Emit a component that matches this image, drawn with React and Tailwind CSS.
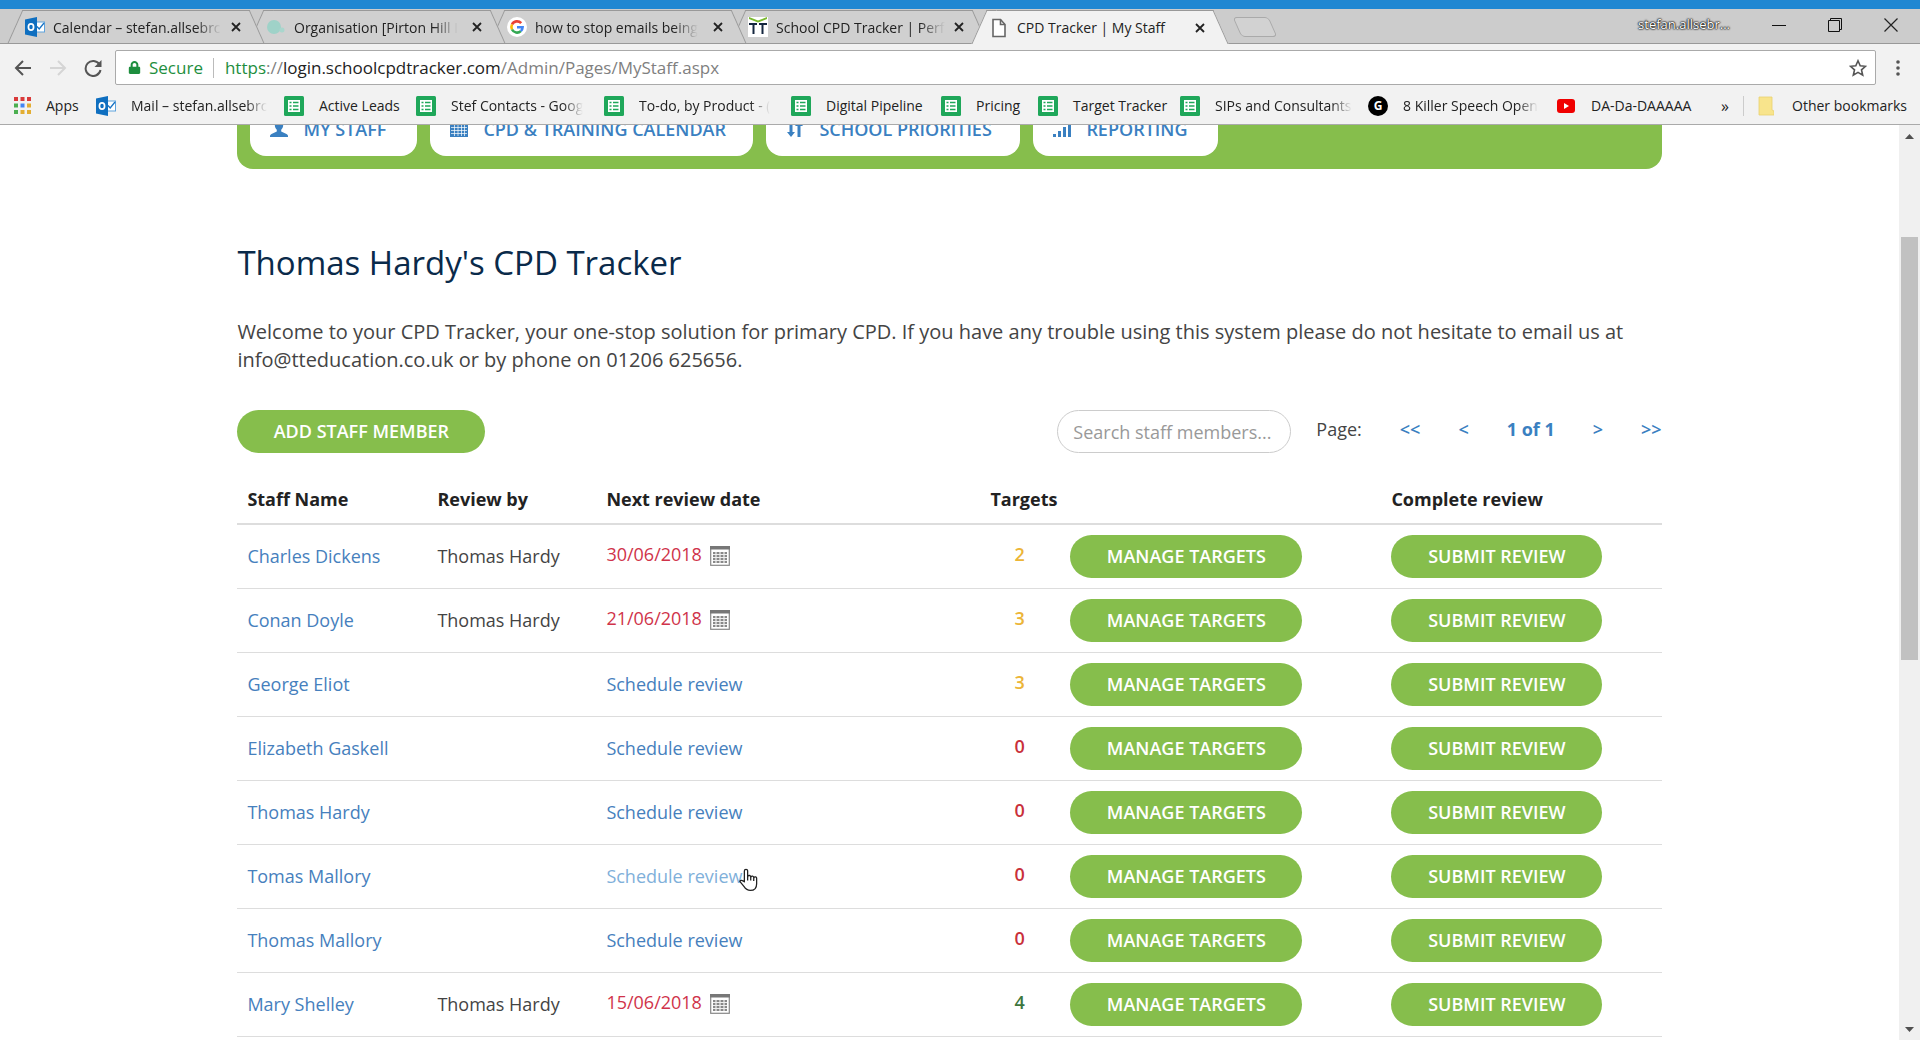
import { FaLock } from 'react-icons/fa';
import { clsx } from 'clsx';

const TABS = [
  { title: 'Calendar – stefan.allsebrc', icon: 'outlook', z: 'z-40' },
  { title: 'Organisation [Pirton Hill I', icon: 'blob', z: 'z-30' },
  { title: 'how to stop emails being', icon: 'google', z: 'z-20' },
  { title: 'School CPD Tracker | Perf', icon: 'tt', z: 'z-10' },
  { title: 'CPD Tracker | My Staff', icon: 'file', z: 'z-50', active: true },
];

const BOOKMARKS = [
  { label: 'Apps', icon: 'apps', width: 'w-[67px]' },
  { label: 'Mail – stefan.allsebrc', icon: 'outlook', width: 'w-[173px]', fade: true },
  { label: 'Active Leads', icon: 'sheet', width: 'w-[117px]' },
  { label: 'Stef Contacts - Goog', icon: 'sheet', width: 'w-[173px]', fade: true },
  { label: 'To-do, by Product - (', icon: 'sheet', width: 'w-[172px]', fade: true },
  { label: 'Digital Pipeline', icon: 'sheet', width: 'w-[135px]' },
  { label: 'Pricing', icon: 'sheet', width: 'w-[82px]' },
  { label: 'Target Tracker', icon: 'sheet', width: 'w-[127px]' },
  { label: 'SIPs and Consultants', icon: 'sheet', width: 'w-[173px]', fade: true },
  { label: '8 Killer Speech Open', icon: 'g', width: 'w-[173px]', fade: true },
  { label: 'DA-Da-DAAAAA', icon: 'youtube', width: 'w-[143px]' },
];

const NAV = [
  { label: 'MY STAFF', icon: 'user', width: 'w-[167px]' },
  { label: 'CPD & TRAINING CALENDAR', icon: 'calendar', width: 'w-[323px]' },
  { label: 'SCHOOL PRIORITIES', icon: 'sort', width: 'w-[254px]' },
  { label: 'REPORTING', icon: 'bars', width: 'w-[185px]' },
];

const STAFF = [
  { name: 'Charles Dickens', by: 'Thomas Hardy', date: '30/06/2018', targets: 2 },
  { name: 'Conan Doyle', by: 'Thomas Hardy', date: '21/06/2018', targets: 3 },
  { name: 'George Eliot', targets: 3 },
  { name: 'Elizabeth Gaskell', targets: 0 },
  { name: 'Thomas Hardy', targets: 0 },
  { name: 'Tomas Mallory', targets: 0, hovered: true },
  { name: 'Thomas Mallory', targets: 0 },
  { name: 'Mary Shelley', by: 'Thomas Hardy', date: '15/06/2018', targets: 4 },
];

function targetColor(n) {
  if (n === 0) return 'text-[#c9303a]';
  return n < 4 ? 'text-[#ecb537]' : 'text-[#3c763d]';
}

function Icon({ name }) {
  switch (name) {
    case 'outlook':
      return (
        <svg viewBox="0 0 20 20" className="size-5 shrink-0">
          <rect x="9" y="5" width="10.500" height="10" fill="#fff" stroke="#5fa3dc" />
          <path d="M12 9.500l2.200 2.500 4.800-6" fill="none" stroke="#1a74c4" strokeWidth="1.300" />
          <path d="M0 2.500L12 0v20L0 17.500z" fill="#0f6fc0" />
          <ellipse cx="6" cy="10" rx="2.600" ry="3.200" fill="none" stroke="#fff" strokeWidth="1.700" />
        </svg>
      );
    case 'blob':
      return (
        <svg viewBox="0 0 20 20" className="size-5 shrink-0">
          <circle cx="8" cy="10" r="7" fill="#9fd2c8" />
          <circle cx="16" cy="13" r="2.500" fill="#a9d6cd" />
        </svg>
      );
    case 'google':
      return (
        <svg viewBox="0 0 20 20" className="size-5 shrink-0">
          <circle cx="10" cy="10" r="10" fill="#fff" />
          <g fill="none" strokeWidth="2.600">
            <path d="M14.200 6.200A5.600 5.600 0 0 0 5 7.500" stroke="#ea4335" />
            <path d="M5 7.500a5.600 5.600 0 0 0 0 5" stroke="#fbbc05" />
            <path d="M5 12.500a5.600 5.600 0 0 0 8.800 1.600" stroke="#34a853" />
            <path d="M13.800 14.100A5.600 5.600 0 0 0 15.600 10.200H10" stroke="#4285f4" />
          </g>
        </svg>
      );
    case 'tt':
      return (
        <svg viewBox="0 0 20 20" className="size-5 shrink-0">
          <rect width="20" height="20" fill="#fff" />
          <path d="M1 0l9 3.500L19 0v2L10 5.500 1 2z" fill="#7ab92f" />
          <path d="M1 7h8M5.500 7v10M11 7h8M14.500 7v10" fill="none" stroke="#14263f" strokeWidth="2" />
        </svg>
      );
    case 'file':
      return (
        <svg viewBox="0 0 20 20" className="size-5 shrink-0" fill="#fff" stroke="#666" strokeWidth="1.600">
          <path d="M4 1.500h7.500L16 6.500v12H4z" />
          <path d="M11.500 1.500v5H16" fill="none" />
        </svg>
      );
    case 'apps':
      return (
        <svg viewBox="0 0 17 17" className="size-[17px] shrink-0">
          {['#d93a3a', '#d93a3a', '#d93a3a', '#4caf50', '#4285f4', '#e3ae33', '#4caf50', '#e3ae33', '#e3ae33'].map((c, i) => (
            <rect key={i} x={(i % 3) * 6.5} y={Math.floor(i / 3) * 6.5} width="4" height="4" fill={c} />
          ))}
        </svg>
      );
    case 'sheet':
      return (
        <svg viewBox="0 0 20 20" className="size-5 shrink-0">
          <rect width="20" height="20" rx="1.500" fill="#1fa75a" />
          <rect x="4" y="4" width="12" height="12" fill="#fff" />
          <path d="M5.500 6.500h2M9 6.500h5.500M5.500 10h2M9 10h5.500M5.500 13.500h2M9 13.500h5.500" stroke="#1fa75a" strokeWidth="1.500" />
        </svg>
      );
    case 'g':
      return (
        <span className="flex size-5 shrink-0 items-center justify-center rounded-full bg-black text-xs font-bold text-white">G</span>
      );
    case 'youtube':
      return (
        <svg viewBox="0 0 20 20" className="size-5 shrink-0">
          <rect x="1" y="3" width="18" height="14" rx="3" fill="#f00000" />
          <path d="M8 7l5 3-5 3z" fill="#fff" />
        </svg>
      );
    case 'user':
      return (
        <svg viewBox="0 0 18 18" className="size-[18px] shrink-0" fill="currentColor">
          <path d="M9 0c2.800 0 4.200 2 4.200 4.800 0 2-.8 3.900-2 5v1.700l5.300 2.600c1 .5 1.500 1.200 1.500 2.200V17H0v-.700c0-1 .5-1.700 1.500-2.200l5.300-2.600V9.800c-1.200-1.100-2-3-2-5C4.800 2 6.200 0 9 0z" />
        </svg>
      );
    case 'calendar':
      return (
        <svg viewBox="0 0 18 18" className="size-[18px] shrink-0">
          <path d="M0 1h18v16H0z" fill="currentColor" />
          <path d="M1 7.500h16M1 10.500h16M1 13.500h16M4.500 5v11M8 5v11M11.500 5v11M14.500 5v11" stroke="#fff" strokeWidth=".7" />
        </svg>
      );
    case 'sort':
      return (
        <svg viewBox="0 0 18 18" className="size-[18px] shrink-0" fill="currentColor">
          <path d="M3.500 1h3v11H9l-4 5-4-5h2.500zM11.500 17h3V6H17l-4-5-4 5h2.500z" />
        </svg>
      );
    case 'bars':
      return (
        <svg viewBox="0 0 18 18" className="size-[18px] shrink-0" fill="currentColor">
          <path d="M0 14h3v3H0zM5 11h3v6H5zM10 7h3v10h-3zM15 2h3v15h-3z" />
        </svg>
      );
    default:
      return null;
  }
}

function Tab({ tab }) {
  const face = tab.active
    ? '-mb-px before:bg-[#f2f2f2] after:bg-[#f2f2f2]'
    : 'before:bg-[#d0d0d0] after:bg-[#d0d0d0]';
  return (
    <div
      className={clsx(
        'relative -mr-[15px] flex w-64 items-center pt-px pr-[22px] pl-[17px] before:absolute before:inset-y-0 before:left-[7px] before:right-8 before:-skew-x-24 before:border-t before:border-l before:border-[#999] after:absolute after:inset-y-0 after:left-8 after:right-[7px] after:skew-x-24 after:border-t after:border-r after:border-[#999]',
        face,
        tab.z
      )}
    >
      <a href="#" className="relative z-10 flex min-w-0 flex-1 items-center gap-2">
        <Icon name={tab.icon} />
        <span className={clsx('whitespace-nowrap', !tab.active && 'mask-r-from-85%')}>{tab.title}</span>
      </a>
      <button type="button" aria-label="Close tab" className="relative z-10 p-px">
        <svg viewBox="0 0 10 10" className="size-[10px]" stroke="#222" strokeWidth="1.800">
          <path d="M1 1l8 8M9 1L1 9" />
        </svg>
      </button>
    </div>
  );
}

function Browser() {
  return (
    <header className="shrink-0 border-b border-[#aaa] bg-[#f2f2f2] text-[14px] text-[#222]">
      <div className="h-[9px] bg-[#1f87d2]" />
      <div className="flex h-[35px] border-b border-[#999] bg-[#ccc] pt-px pl-2">
        {TABS.map(t => <Tab key={t.title} tab={t} />)}
        <button type="button" aria-label="New tab" className="mt-[7px] ml-6 h-5 w-9 skew-x-24 rounded-sm border border-[#aaa] bg-[#d2d2d2]" />
        <div className="ml-auto flex items-center gap-[42px] pr-[22px] pb-1">
          <span className="text-[13px] whitespace-nowrap text-white text-shadow-[0_0_2px_#000,0_0_2px_#000,0_0_1px_#000]">stefan.allsebr...</span>
          <button type="button" aria-label="Minimise">
            <svg viewBox="0 0 14 14" className="size-[14px]" stroke="#111"><path d="M0 7.500h14" /></svg>
          </button>
          <button type="button" aria-label="Restore">
            <svg viewBox="0 0 14 14" className="size-[14px]" fill="none" stroke="#111"><path d="M.5 2.500h11v11H.5zM2.500 2.500v-2h11v11h-2" /></svg>
          </button>
          <button type="button" aria-label="Close">
            <svg viewBox="0 0 14 14" className="size-[14px]" stroke="#222" strokeWidth="1.200"><path d="M.5.5l13 13M13.500.5l-13 13" /></svg>
          </button>
        </div>
      </div>

      <div className="flex items-center pt-[6px] pr-5 pl-[14px]">
        <button type="button" aria-label="Back">
          <svg viewBox="0 0 18 18" className="size-[18px]" fill="none" stroke="#555" strokeWidth="2"><path d="M17 9H2M9 2L2 9l7 7" /></svg>
        </button>
        <button type="button" aria-label="Forward" className="ml-[17px]">
          <svg viewBox="0 0 18 18" className="size-[18px]" fill="none" stroke="#d5d5d5" strokeWidth="2"><path d="M1 9h15M9 2l7 7-7 7" /></svg>
        </button>
        <button type="button" aria-label="Reload" className="ml-[17px]">
          <svg viewBox="0 0 18 18" className="size-[18px]" fill="none" stroke="#555" strokeWidth="2"><path d="M15.500 5.500A7.500 7.500 0 1 0 16.500 11" /><path d="M17.500 1v7h-7z" fill="#555" stroke="none" /></svg>
        </button>
        <div className="ml-[13px] flex h-[35px] flex-1 items-center rounded-xs border border-[#aaa] bg-white pr-2 pl-3 text-[17px]">
          <FaLock className="size-[13px] text-[#1e8e3e]" />
          <span className="ml-2 text-[#1e8e3e]">Secure</span>
          <span className="ml-[10px] h-5 w-px bg-[#bbb]" />
          <a href="#" className="ml-[11px] text-[#808080]">
            <span className="text-[#1e8e3e]">https</span>://<span className="text-[#222]">login.schoolcpdtracker.com</span>/Admin/Pages/MyStaff.aspx
          </a>
          <button type="button" aria-label="Bookmark this page" className="ml-auto">
            <svg viewBox="0 0 18 18" className="size-[18px]" fill="none" stroke="#555" strokeWidth="1.600"><path d="M9 1.800l2.200 5 5.300.5-4 3.600 1.200 5.300L9 13.400l-4.700 2.800 1.200-5.300-4-3.600 5.300-.5z" /></svg>
          </button>
        </div>
        <button type="button" aria-label="Menu" className="ml-5">
          <svg viewBox="0 0 4 18" className="h-[18px] w-1" fill="#555"><circle cx="2" cy="3" r="1.800" /><circle cx="2" cy="9" r="1.800" /><circle cx="2" cy="15" r="1.800" /></svg>
        </button>
      </div>

      <nav aria-label="Bookmarks" className="flex h-[39px] items-center pt-[2px] pr-[13px] pl-[14px]">
        <div className="flex gap-[15px]">
          {BOOKMARKS.map(b => (
            <a key={b.label} href="#" className={clsx('flex shrink-0 items-center gap-[15px]', b.width)}>
              <Icon name={b.icon} />
              <span className={clsx('whitespace-nowrap', b.fade && 'mask-r-from-85%')}>{b.label}</span>
            </a>
          ))}
        </div>
        <button type="button" aria-label="More bookmarks" className="ml-auto text-[16px]">»</button>
        <span className="mx-[14px] h-5 w-px bg-[#ccc]" />
        <a href="#" className="flex items-center gap-[18px] whitespace-nowrap">
          <svg viewBox="0 0 16 20" className="h-5 w-4"><path d="M1 1h13v13l2 1v4H1z" fill="#f8e48c" stroke="#e8d070" strokeWidth=".8" /></svg>
          Other bookmarks
        </a>
      </nav>
    </header>
  );
}

function PillButton({ children, className }) {
  return (
    <button type="button" className={clsx('h-[43px] rounded-full bg-[#86be4c] font-semibold whitespace-nowrap text-white', className)}>
      {children}
    </button>
  );
}

function CalendarButton() {
  return (
    <button type="button" aria-label="Pick a date" className="shrink-0">
      <svg viewBox="0 0 20 20" className="size-5">
        <rect x=".7" y=".7" width="18.600" height="18.600" fill="#fff" stroke="#888" strokeWidth="1.200" />
        <path d="M0 0h20v3.500H0z" fill="#777" />
        <path d="M3 6h14v11H3z" fill="#888" />
        <path d="M3 8.500h14M3 11.500h14M3 14.500h14M6 6v11M10 6v11M14 6v11" stroke="#eee" strokeWidth="1.200" />
      </svg>
    </button>
  );
}

function HandCursor() {
  return (
    <svg viewBox="0 0 22 26" className="absolute top-1 left-full -ml-1 h-6 w-5" fill="#fff" stroke="#222" strokeWidth="1.400" strokeLinejoin="round">
      <path d="M7 15V3a1.800 1.800 0 0 1 3.600 0v6.500a1.700 1.700 0 0 1 3.400.5 1.700 1.700 0 0 1 3.300.8 1.600 1.600 0 0 1 3.200.7V17c0 4.500-2.500 7.500-7 7.500-3.500 0-5-1.500-7-4.500l-4.500-5.500c.8-1.800 2.700-1.500 5 .5z" />
      <path d="M10.600 9v4.500M14 10v3.500M17.300 11v3" />
    </svg>
  );
}

function StaffRow({ staff }) {
  return (
    <tr className="h-16 border-b border-[#ddd]">
      <td className="pl-[10px]"><a href="#" className="text-[#4680bd]">{staff.name}</a></td>
      <td>{staff.by}</td>
      <td>
        {staff.date ? (
          <span className="flex items-center gap-2 text-[#d0334a]">
            <span className="pb-[3px]">{staff.date}</span>
            <CalendarButton />
          </span>
        ) : (
          <a href="#" className={clsx('relative', staff.hovered ? 'text-[#7fb0da]' : 'text-[#4680bd]')}>
            Schedule review
            {staff.hovered && <HandCursor />}
          </a>
        )}
      </td>
      <td className={clsx('pb-[3px] pl-6 font-semibold', targetColor(staff.targets))}>{staff.targets}</td>
      <td><PillButton className="w-[232px]">MANAGE TARGETS</PillButton></td>
      <td><PillButton className="w-[211px]">SUBMIT REVIEW</PillButton></td>
    </tr>
  );
}

function Scrollbar() {
  return (
    <div aria-hidden="true" className="flex w-[21px] shrink-0 flex-col bg-[#f0f0f0] px-[2px]">
      <svg viewBox="0 0 17 21" className="h-[21px]"><path d="M4 14l4.500-5 4.500 5z" fill="#505050" /></svg>
      <div className="flex-91" />
      <div className="flex-423 bg-[#c1c1c1]" />
      <div className="flex-359" />
      <svg viewBox="0 0 17 21" className="h-[21px]"><path d="M4 8l4.500 5L13 8z" fill="#505050" /></svg>
    </div>
  );
}

export default function App() {
  return (
    <div className="flex h-screen flex-col overflow-hidden bg-white font-['Open_Sans',sans-serif] text-[18px] text-[#444]">
      <Browser />
      <div className="flex min-h-0 flex-1">
        <main className="min-w-0 flex-1 overflow-hidden">
          <div className="mx-auto w-3/4">
            <nav aria-label="Main" className="-mt-[34px] flex gap-[13px] rounded-2xl bg-[#86be4c] p-[13px]">
              {NAV.map(n => (
                <a key={n.label} href="#" className={clsx('flex h-[52px] items-center gap-[15px] rounded-2xl bg-white pb-[2px] pl-5 font-semibold whitespace-nowrap text-[#3a80c1]', n.width)}>
                  <Icon name={n.icon} />
                  {n.label}
                </a>
              ))}
            </nav>

            <h1 className="mt-[70px] text-[33px] leading-[48px] text-[#0a2a4a]">Thomas Hardy's CPD Tracker</h1>
            <p className="mt-[31px] text-[20px] leading-7">
              Welcome to your CPD Tracker, your one-stop solution for primary CPD. If you have any trouble using this system please do not hesitate to email us at info@tteducation.co.uk or by phone on 01206 625656.
            </p>

            <div className="mt-9 flex items-center justify-between">
              <PillButton className="w-[248px]">ADD STAFF MEMBER</PillButton>
              <div className="flex items-center">
                <input
                  type="text"
                  aria-label="Search staff members"
                  placeholder="Search staff members..."
                  className="h-[43px] w-[234px] rounded-full border border-[#ccc] pl-[15px] placeholder:text-[#999]"
                />
                <div className="ml-[25px] flex items-center gap-[38px] pb-1 font-semibold text-[#3a80c1]">
                  <span className="font-normal text-[#444]">Page:</span>
                  <a href="#">&lt;&lt;</a>
                  <a href="#">&lt;</a>
                  <span className="font-bold">1 of 1</span>
                  <a href="#">&gt;</a>
                  <a href="#">&gt;&gt;</a>
                </div>
              </div>
            </div>

            <table className="mt-[23px] w-full table-fixed border-collapse text-left">
              <colgroup>
                <col className="w-[200px]" />
                <col className="w-[169px]" />
                <col className="w-[384px]" />
                <col className="w-[80px]" />
                <col className="w-[321px]" />
                <col />
              </colgroup>
              <thead>
                <tr className="h-12 border-b-2 border-[#ddd] text-[#222]">
                  <th className="pl-[10px] font-bold">Staff Name</th>
                  <th className="font-bold">Review by</th>
                  <th className="font-bold">Next review date</th>
                  <th className="font-bold" colSpan={2}>Targets</th>
                  <th className="font-bold">Complete review</th>
                </tr>
              </thead>
              <tbody>
                {STAFF.map(s => <StaffRow key={s.name} staff={s} />)}
              </tbody>
            </table>
          </div>
        </main>
        <Scrollbar />
      </div>
    </div>
  );
}
